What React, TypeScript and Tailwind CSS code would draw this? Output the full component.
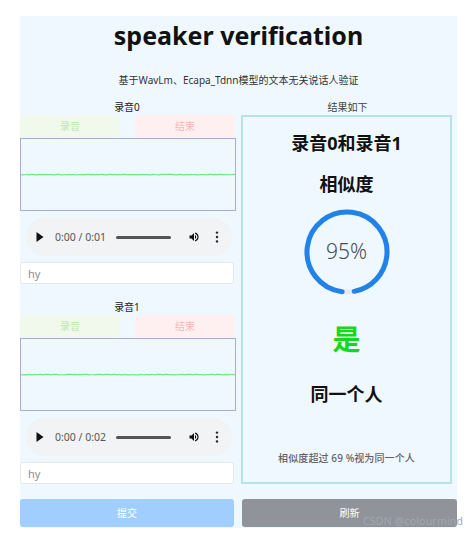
import { Fragment } from "react";

const font = { fontFamily: '"Noto Sans", "Noto Sans CJK SC", sans-serif' };

function Waveform({ seed }: { seed: number }) {
  // small jitter along the flat line, like a near silent recording
  const points = Array.from({ length: 108 }, (_, i) => {
    const y = 35.6 + Math.sin(i * i * seed) * 0.3;
    return `${i * 2},${y.toFixed(2)}`;
  }).join(" ");
  return (
    <div className="h-[73px] w-[216px] border border-[#a9aed0] bg-[#f0f8ff]">
      <svg width="214" height="71" viewBox="0 0 214 71" className="block">
        <polyline points={points} fill="none" stroke="#74e684" strokeWidth="1.2" />
      </svg>
    </div>
  );
}

function AudioBar({ time }: { time: string }) {
  return (
    <div className="ml-[6px] flex h-[38px] w-[206px] items-center rounded-[19px] bg-[#f1f3f4] pl-[10px] text-[#3a3a3a]">
      <svg width="8" height="10" viewBox="0 0 8 10" className="mr-[11px]">
        <path d="M0.5 0v10l7-5z" fill="#111" />
      </svg>
      <span className="w-[61px] whitespace-nowrap text-[10.5px] leading-none text-[#555]">{`0:00 / ${time}`}</span>
      <div className="h-[3px] w-[55px] rounded-full bg-[#555]" />
      <svg width="12" height="12" viewBox="0 0 24 24" className="ml-[17px]">
        <path
          d="M3 9v6h4l5 5V4L7 9H3zm13.5 3A4.5 4.5 0 0 0 14 8v8a4.5 4.5 0 0 0 2.5-4zM14 3.2v2.1a7 7 0 0 1 0 13.4v2.1a9 9 0 0 0 0-17.6z"
          fill="#111"
        />
      </svg>
      <svg width="4" height="12" viewBox="0 0 4 12" className="ml-[15px]">
        <circle cx="2" cy="1.6" r="1.2" fill="#222" />
        <circle cx="2" cy="6" r="1.2" fill="#222" />
        <circle cx="2" cy="10.4" r="1.2" fill="#222" />
      </svg>
    </div>
  );
}

function Recorder({ label, time, seed }: { label: string; time: string; seed: number }) {
  return (
    <Fragment>
      <div className="h-[15px] w-[214px] text-center text-[10px] leading-[15px] text-[#222]">{label}</div>
      <div className="flex h-[23px] w-[215px] justify-between">
        <button className="w-[100px] rounded-[3px] bg-[#f0f9eb] text-[10px] text-[#c2e7b0]">录音</button>
        <button className="w-[100px] rounded-[3px] bg-[#fef0f0] text-[10px] text-[#fab6b6]">结束</button>
      </div>
      <Waveform seed={seed} />
      <div className="mt-[7px]">
        <AudioBar time={time} />
      </div>
      <input
        readOnly
        placeholder="hy"
        className="mt-[6px] h-[22px] w-[214px] rounded-[3px] border border-[#e4e7ed] bg-white px-[7px] text-[11px] placeholder:text-[#8a8f99]"
      />
    </Fragment>
  );
}

function ScoreRing({ percent }: { percent: number }) {
  const r = 40;
  const full = 2 * Math.PI * r;
  return (
    <div className="relative h-[86px] w-[86px]">
      <svg width="86" height="86" viewBox="0 0 86 86">
        <circle cx="43" cy="43" r={r} fill="none" stroke="#e5e9f2" strokeWidth="5" />
        <circle
          cx="43"
          cy="43"
          r={r}
          fill="none"
          stroke="#2183e8"
          strokeWidth="5"
          strokeLinecap="round"
          strokeDasharray={`${(full * percent) / 100} ${full}`}
          transform="rotate(97 43 43)"
        />
      </svg>
      <div className="absolute inset-0 flex items-center justify-center text-[21px] font-light text-[#4a4d55]">{percent}%</div>
    </div>
  );
}

export default function App() {
  return (
    <div className="h-[533px] w-[474px] overflow-hidden bg-white pl-[20px] pt-[16px]" style={font}>
      <div className="h-[512px] w-[437px] bg-[#f0f8ff]">
        <h1 className="text-center text-[25px] font-bold leading-[38px] text-[#111]">speaker verification</h1>
        <p className="mt-[19px] text-center text-[10px] leading-[15px] text-[#333]">基于WavLm、Ecapa_Tdnn模型的文本无关说话人验证</p>
        <div className="mt-[12px] flex">
          <div className="w-[221px]">
            <Recorder label="录音0" time="0:01" seed={1.7} />
            <div className="h-[16px]" />
            <Recorder label="录音1" time="0:02" seed={2.3} />
          </div>
          <div className="w-[211px]">
            <div className="h-[15px] pl-[2px] text-center text-[10px] leading-[15px] text-[#444]">结果如下</div>
            <div className="flex h-[369px] flex-col items-center border-2 border-[#b5e3e8] pt-[13px]">
              <div className="text-[18px] font-bold leading-[26px] text-[#111]">录音0和录音1</div>
              <div className="mt-[15px] text-[18px] font-bold leading-[26px] text-[#111]">相似度</div>
              <div className="mt-[12px]">
                <ScoreRing percent={95} />
              </div>
              <div className="mt-[24px] text-[28px] font-bold leading-[40px] text-[#16d916]">是</div>
              <div className="mt-[22px] text-[18px] font-bold leading-[26px] text-[#111]">同一个人</div>
              <div className="mt-[44px] text-[10px] font-medium leading-[14px] tracking-[0.1px] text-[#606266]">相似度超过 69 %视为同一个人</div>
            </div>
          </div>
        </div>
        <div className="mt-[15px] flex">
          <button className="h-[28px] w-[214px] rounded-[3px] bg-[#a0cfff] text-[10px] text-white">提交</button>
          <button className="ml-[8px] h-[28px] w-[215px] rounded-[3px] bg-[#909399] text-[10px] text-white">刷新</button>
        </div>
      </div>
      {/* watermark that sits over the screenshot */}
      <div className="absolute left-[363px] top-[514px] whitespace-nowrap text-[10.5px] tracking-[0.2px] text-[#a3a9b1]">CSDN @colourmind</div>
    </div>
  );
}
